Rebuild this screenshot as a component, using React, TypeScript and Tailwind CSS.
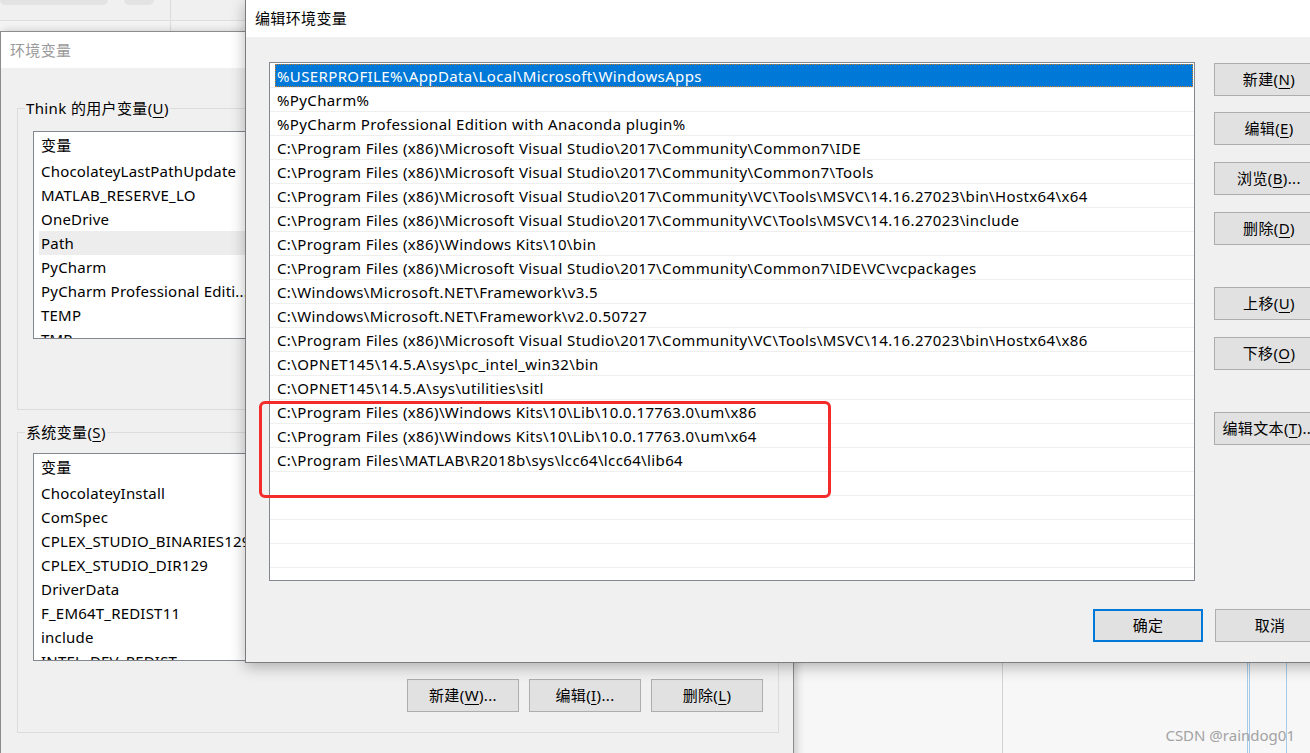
import React from "react";

const dialogPaths: string[] = [
  String.raw`%USERPROFILE%\AppData\Local\Microsoft\WindowsApps`,
  String.raw`%PyCharm%`,
  String.raw`%PyCharm Professional Edition with Anaconda plugin%`,
  String.raw`C:\Program Files (x86)\Microsoft Visual Studio\2017\Community\Common7\IDE`,
  String.raw`C:\Program Files (x86)\Microsoft Visual Studio\2017\Community\Common7\Tools`,
  String.raw`C:\Program Files (x86)\Microsoft Visual Studio\2017\Community\VC\Tools\MSVC\14.16.27023\bin\Hostx64\x64`,
  String.raw`C:\Program Files (x86)\Microsoft Visual Studio\2017\Community\VC\Tools\MSVC\14.16.27023\include`,
  String.raw`C:\Program Files (x86)\Windows Kits\10\bin`,
  String.raw`C:\Program Files (x86)\Microsoft Visual Studio\2017\Community\Common7\IDE\VC\vcpackages`,
  String.raw`C:\Windows\Microsoft.NET\Framework\v3.5`,
  String.raw`C:\Windows\Microsoft.NET\Framework\v2.0.50727`,
  String.raw`C:\Program Files (x86)\Microsoft Visual Studio\2017\Community\VC\Tools\MSVC\14.16.27023\bin\Hostx64\x86`,
  String.raw`C:\OPNET145\14.5.A\sys\pc_intel_win32\bin`,
  String.raw`C:\OPNET145\14.5.A\sys\utilities\sitl`,
  String.raw`C:\Program Files (x86)\Windows Kits\10\Lib\10.0.17763.0\um\x86`,
  String.raw`C:\Program Files (x86)\Windows Kits\10\Lib\10.0.17763.0\um\x64`,
  String.raw`C:\Program Files\MATLAB\R2018b\sys\lcc64\lcc64\lib64`,
  "",
  "",
  "",
  "",
  "",
];

const userVars = [
  "ChocolateyLastPathUpdate",
  "MATLAB_RESERVE_LO",
  "OneDrive",
  "Path",
  "PyCharm",
  "PyCharm Professional Editi...",
  "TEMP",
  "TMP",
];

const systemVars = [
  "ChocolateyInstall",
  "ComSpec",
  "CPLEX_STUDIO_BINARIES129",
  "CPLEX_STUDIO_DIR129",
  "DriverData",
  "F_EM64T_REDIST11",
  "include",
  "INTEL_DEV_REDIST",
];

function Mn({ c }: { c: string }) {
  return <span className="underline underline-offset-[3px] decoration-1">{c}</span>;
}

function Btn({
  children,
  className = "",
  primary,
}: {
  children: React.ReactNode;
  className?: string;
  primary?: boolean;
}) {
  return (
    <div
      className={`flex items-center justify-center h-[33px] bg-[#e1e1e1] text-[15px] whitespace-nowrap ${
        primary ? "border-2 border-[#0078d7]" : "border border-[#adadad]"
      } ${className}`}
    >
      {children}
    </div>
  );
}

function VarList({ items, highlight }: { items: string[]; highlight?: string }) {
  return (
    <div className="ml-[15px] mr-[15px] h-[208px] bg-white border border-[#828790] overflow-hidden tracking-[0.2px]">
      <div className="h-[27px] flex items-center pl-[7px]">变量</div>
      {items.map((v) => (
        <div
          key={v}
          className={`h-[24px] flex items-center pl-[2px] ml-[5px] ${v === highlight ? "bg-[#ededed]" : ""}`}
        >
          <span className="whitespace-nowrap">{v}</span>
        </div>
      ))}
    </div>
  );
}

export default function App() {
  return (
    <div className="relative w-[1310px] h-[753px] overflow-hidden bg-[#f0f0f0] text-[15px] tracking-[0.37px] text-black font-['Noto_Sans','Noto_Sans_CJK_SC',sans-serif]">
      {/* desktop strip behind, top-left */}
      <div className="absolute left-0 top-0 w-[300px] h-[31px] flex flex-col">
        <div className="h-[21px] flex items-start border-b border-[#dedede]">
          <div className="w-[108px] h-[5px] rounded-b-[6px] bg-[#e3e3e3]" />
          <div className="ml-[16px] w-[30px] h-[5px] rounded-b-[6px] bg-[#e3e3e3]" />
          <div className="ml-[16px] w-px h-full bg-[#dcdcdc]" />
        </div>
        <div className="flex-1 bg-[#f3f3f3] flex">
          <div className="ml-[170px] w-px h-full bg-[#dcdcdc]" />
        </div>
      </div>

      {/* window behind, right side */}
      <div className="absolute left-[793px] top-0 right-0 bottom-0 bg-[#f7f7f7] flex">
        <div className="w-[210px] border-r border-[#d2d2d2]" />
        <div className="w-[245px] border-r border-[#a6cbe9]" />
        <div className="w-[2px] border-r border-[#a6cbe9]" />
        <div className="w-[37px] border-r border-[#a6cbe9]" />
      </div>

      {/* 环境变量 window */}
      <div className="absolute left-0 top-[31px] w-[794px] h-[740px] bg-[#f0f0f0] border-t border-l border-r border-[#8c8c8c] shadow-[3px_0_8px_rgba(0,0,0,0.18)] flex flex-col">
        <div className="h-[36px] bg-white flex items-center pl-[9px] text-[#9a9a9a]">环境变量</div>
        <div className="flex flex-col pl-[16px] pr-[14px]">
          <div className="mt-[40px] border border-[#dcdcdc] pb-[70px]">
            <div className="-mt-[11px] ml-[7px] w-fit px-[1px] h-[20px] leading-[20px] bg-[#f0f0f0]">
              Think 的用户变量(<Mn c="U" />)
            </div>
            <div className="mt-[13px]">
              <VarList items={userVars} highlight="Path" />
            </div>
          </div>
          <div className="mt-[22px] border border-[#dcdcdc] pb-[20px]">
            <div className="-mt-[11px] ml-[7px] w-fit px-[1px] h-[20px] leading-[20px] bg-[#f0f0f0]">
              系统变量(<Mn c="S" />)
            </div>
            <div className="mt-[11px]">
              <VarList items={systemVars} />
            </div>
            <div className="mt-[18px] flex justify-end gap-[10px] pr-[15px]">
              <Btn className="w-[112px]">
                新建(<Mn c="W" />)...
              </Btn>
              <Btn className="w-[112px]">
                编辑(<Mn c="I" />)...
              </Btn>
              <Btn className="w-[112px]">
                删除(<Mn c="L" />)
              </Btn>
            </div>
          </div>
        </div>
      </div>

      {/* 编辑环境变量 dialog */}
      <div className="absolute left-[245px] top-0 w-[1090px] h-[663px] bg-[#f0f0f0] border-l border-b border-[#7c7c7c] shadow-[0_4px_14px_rgba(0,0,0,0.28)] flex flex-col">
        <div className="h-[37px] bg-white flex items-center pl-[9px]">编辑环境变量</div>
        <div className="flex flex-col pl-[23px] pr-[10px] pt-[25px]">
          <div className="flex">
            <div className="w-[926px] h-[519px] bg-white border border-[#828790] overflow-hidden pt-[1px]">
              {dialogPaths.map((p, i) => (
                <div key={i} className="h-[24px] border-b border-[#efefef] flex">
                  <div
                    className={`flex-1 ml-[5px] mr-[1px] flex items-center pl-[2px] pt-[1px] whitespace-nowrap ${
                      i === 0
                        ? "bg-[#0078d7] text-white outline-1 outline-dotted outline-[#c8812e] -outline-offset-1"
                        : ""
                    }`}
                  >
                    {p}
                  </div>
                </div>
              ))}
            </div>
            <div className="ml-[19px] w-[110px] flex flex-col">
              <Btn className="mt-[1px]">
                新建(<Mn c="N" />)
              </Btn>
              <Btn className="mt-[16px]">
                编辑(<Mn c="E" />)
              </Btn>
              <Btn className="mt-[17px]">
                浏览(<Mn c="B" />)...
              </Btn>
              <Btn className="mt-[17px]">
                删除(<Mn c="D" />)
              </Btn>
              <Btn className="mt-[42px]">
                上移(<Mn c="U" />)
              </Btn>
              <Btn className="mt-[17px]">
                下移(<Mn c="O" />)
              </Btn>
              <Btn className="mt-[42px]">
                编辑文本(<Mn c="T" />)...
              </Btn>
            </div>
          </div>
          <div className="mt-[28px] flex justify-end gap-[12px]">
            <Btn primary className="w-[110px]">
              确定
            </Btn>
            <Btn className="w-[110px]">取消</Btn>
          </div>
        </div>
      </div>

      {/* annotation */}
      <div className="absolute left-[259px] top-[401px] w-[572px] h-[97px] border-[3px] border-[#f32b2b] rounded-[6px]" />

      <div className="absolute right-[15px] top-[724px] text-[15px] tracking-normal text-[#a3a3a3]">CSDN @raindog01</div>
    </div>
  );
}
